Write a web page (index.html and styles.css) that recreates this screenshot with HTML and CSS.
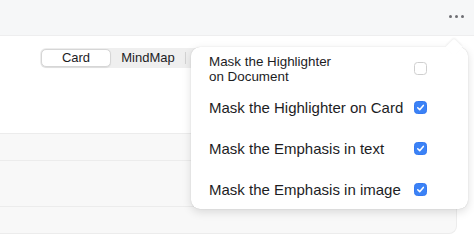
FILE: index.html
```html
<!DOCTYPE html>
<html>
<head>
<meta charset="utf-8">
<link rel="stylesheet" href="styles.css">
</head>
<body>
<div class="topbar">
  <div class="dots"><span></span><span></span><span></span></div>
</div>
<div class="toolbar">
  <div class="segmented">
    <div class="seg selected">Card</div>
    <div class="seg">MindMap</div>
    <div class="seg sep"></div>
  </div>
</div>
<div class="list">
  <div class="row r1"></div>
  <div class="row r2"></div>
  <div class="row r3"></div>
</div>
<div class="popover">
  <div class="arrow"></div>
  <div class="item small">
    <span class="label">Mask the Highlighter<br>on Document</span>
    <span class="check"></span>
  </div>
  <div class="item">
    <span class="label">Mask the Highlighter on Card</span>
    <span class="check on"><svg viewBox="0 0 14 14"><path d="M3.5 7.3 L6 9.8 L10.6 4.4" fill="none" stroke="#fff" stroke-width="2" stroke-linecap="round" stroke-linejoin="round"/></svg></span>
  </div>
  <div class="item mid">
    <span class="label">Mask the Emphasis in text</span>
    <span class="check on"><svg viewBox="0 0 14 14"><path d="M3.5 7.3 L6 9.8 L10.6 4.4" fill="none" stroke="#fff" stroke-width="2" stroke-linecap="round" stroke-linejoin="round"/></svg></span>
  </div>
  <div class="item">
    <span class="label">Mask the Emphasis in image</span>
    <span class="check on"><svg viewBox="0 0 14 14"><path d="M3.5 7.3 L6 9.8 L10.6 4.4" fill="none" stroke="#fff" stroke-width="2" stroke-linecap="round" stroke-linejoin="round"/></svg></span>
  </div>
</div>
</body>
</html>
```
FILE: styles.css
```css
html, body {
  margin: 0;
  padding: 0;
  background: #ffffff;
  font-family: "Liberation Sans", Arial, sans-serif;
  color: #1d1d1f;
  width: 474px;
  height: 250px;
  overflow: hidden;
  position: relative;
}
.topbar {
  height: 35px;
  background: #f6f7f8;
  border-bottom: 1px solid #eeeeef;
  display: flex;
  justify-content: flex-end;
  align-items: center;
  padding-right: 10px;
}
.dots {
  display: flex;
  gap: 3px;
  margin-top: -2px;
}
.dots span {
  width: 3px;
  height: 3px;
  border-radius: 50%;
  background: #6e6e73;
}
.toolbar {
  padding: 12px 0 0 40px;
  height: 50px;
}
.segmented {
  display: flex;
  align-items: center;
  width: 220px;
  height: 20px;
  background: #efefef;
  border-radius: 6px;
  padding: 0 1px;
  box-sizing: border-box;
  font-size: 13px;
  color: #1d1d1f;
}
.seg {
  height: 18px;
  line-height: 18px;
  text-align: center;
  box-sizing: border-box;
  flex: none;
}
.seg.selected {
  width: 70px;
  background: #ffffff;
  border: 1px solid #d6d6d6;
  border-radius: 5px;
  line-height: 16px;
  box-shadow: 0 0.5px 1px rgba(0,0,0,0.08);
}
.seg:nth-child(2) {
  width: 74px;
}
.seg.sep {
  width: 60px;
  border-left: 1px solid #d3d3d3;
  height: 12px;
}
.list {
  margin-top: 35px;
  width: 457px;
  background: #f8f8f8;
  border-top: 1px solid #ececec;
  border-bottom: 1px solid #ececec;
  border-right: 1px solid #ececec;
  border-radius: 0 0 8px 0;
  box-sizing: border-box;
}
.row {
  border-bottom: 1px solid #ececec;
}
.row.r1 { height: 26px; }
.row.r2 { height: 45px; }
.row.r3 { height: 26px; border-bottom: none; }
.popover {
  position: absolute;
  left: 191px;
  top: 47px;
  width: 277px;
  height: 162px;
  background: #ffffff;
  border-radius: 9px;
  box-shadow: 0 0 1px rgba(0,0,0,0.22), 0 3px 10px rgba(0,0,0,0.13);
  box-sizing: border-box;
  padding: 7px 41px 0 18px;
  display: flex;
  flex-direction: column;
}
.arrow {
  position: absolute;
  top: -6px;
  left: 257px;
  width: 12px;
  height: 12px;
  background: #ffffff;
  transform: rotate(45deg);
  box-shadow: -1px -1px 2px rgba(0,0,0,0.06);
  border-radius: 2px 0 0 0;
}
.item {
  position: relative;
  display: flex;
  align-items: center;
  justify-content: space-between;
  height: 40px;
  font-size: 15px;
  color: #1d1d1f;
}
.item.mid {
  height: 42px;
}
.item.small {
  height: 29px;
  font-size: 13.4px;
  line-height: 15px;
  margin-bottom: 4px;
}
.label {
  white-space: nowrap;
}
.check {
  width: 13px;
  height: 13px;
  box-sizing: border-box;
  border-radius: 3.5px;
  border: 1px solid #cfcfcf;
  background: #ffffff;
  display: flex;
  align-items: center;
  justify-content: center;
  flex: none;
}
.check.on {
  background: #3b82f6;
  border-color: #3478f0;
}
.check svg {
  width: 13px;
  height: 13px;
}
```
